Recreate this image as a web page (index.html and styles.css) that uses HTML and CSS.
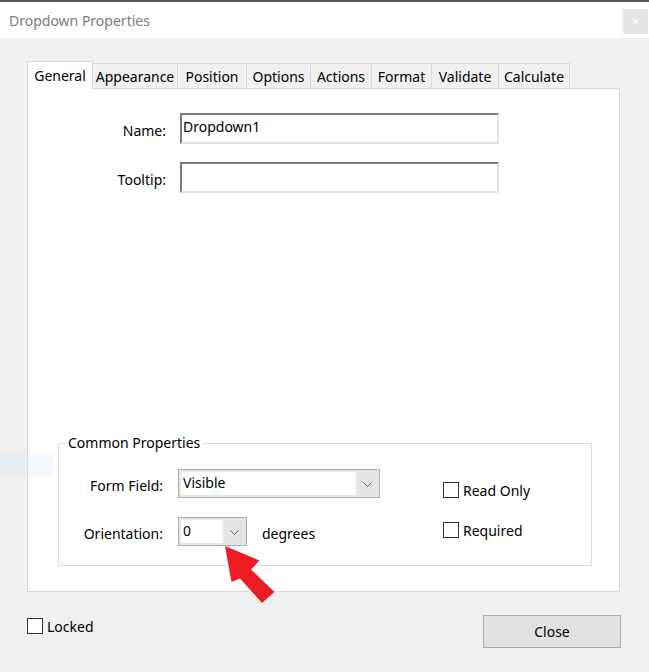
FILE: index.html
```html
<!DOCTYPE html>
<html>
<head>
    <meta charset="utf-8">
    <title>Dropdown Properties</title>
    <link rel="stylesheet" href="styles.css">
</head>
<body>
<div class="window">
    <div class="titlebar">
        <span class="title">Dropdown Properties</span>
        <span class="close-x">&#215;</span>
    </div>
    <div class="content">
        <div class="tabs">
            <div class="tab tab-general active">General</div>
            <div class="tab tab-appearance">Appearance</div>
            <div class="tab tab-position">Position</div>
            <div class="tab tab-options">Options</div>
            <div class="tab tab-actions">Actions</div>
            <div class="tab tab-format">Format</div>
            <div class="tab tab-validate">Validate</div>
            <div class="tab tab-calculate">Calculate</div>
        </div>
        <div class="panel">
            <div class="field-row">
                <label class="field-label">Name:</label>
                <div class="textbox">Dropdown1</div>
            </div>
            <div class="field-row">
                <label class="field-label">Tooltip:</label>
                <div class="textbox"></div>
            </div>
            <fieldset class="group">
                <legend>Common Properties</legend>
                <div class="group-body">
                    <div class="group-fields">
                        <div class="group-row">
                            <span class="group-label">Form Field:</span>
                            <div class="combo wide">
                                <span class="combo-value">Visible</span>
                                <span class="combo-arrow"><svg width="9" height="5" viewBox="0 0 9 5"><path d="M0.5 0.5 L4.5 4.5 L8.5 0.5" fill="none" stroke="#606060" stroke-width="1"/></svg></span>
                            </div>
                        </div>
                        <div class="group-row">
                            <span class="group-label">Orientation:</span>
                            <div class="combo narrow">
                                <span class="combo-value">0</span>
                                <span class="combo-arrow"><svg width="9" height="5" viewBox="0 0 9 5"><path d="M0.5 0.5 L4.5 4.5 L8.5 0.5" fill="none" stroke="#606060" stroke-width="1"/></svg></span>
                            </div>
                            <span class="unit">degrees</span>
                        </div>
                    </div>
                    <div class="group-checks">
                        <label class="check"><span class="box"></span>Read Only</label>
                        <label class="check"><span class="box"></span>Required</label>
                    </div>
                </div>
            </fieldset>
        </div>
        <div class="footer">
            <label class="check locked"><span class="box"></span>Locked</label>
            <button class="btn" type="button">Close</button>
        </div>
    </div>
    <div class="hover-strip"></div>
    <svg class="pointer" width="60" height="70" viewBox="0 0 60 70">
        <polygon points="5,6 39.5,20.5 31,29.5 54.5,52 42,63 20,38.5 11.5,42" fill="#ed1c24"/>
    </svg>
</div>
</body>
</html>
```

FILE: styles.css
```css
html, body{
    margin: 0;
    padding: 0;
}
body{
    background: #f0f0f0;
    font-family: "Noto Sans", "Open Sans", sans-serif;
    font-size: 14px;
    color: #000;
}
.window{
    position: relative;
    width: 649px;
    height: 672px;
    overflow: hidden;
    background: #f0f0f0;
}
.titlebar{
    height: 36px;
    border-top: 2px solid #575757;
    background: #fff;
    display: flex;
    align-items: center;
    justify-content: space-between;
    padding-left: 9px;
}
.title{
    color: #7b7b7b;
    font-size: 14px;
}
.close-x{
    width: 25px;
    height: 25px;
    margin-right: 1px;
    margin-top: 2px;
    background: #e5e5e5;
    color: #fafafa;
    font-size: 13px;
    line-height: 24px;
    text-align: center;
}
.content{
    padding: 23px 29px 0 27px;
}
.tabs{
    display: flex;
    align-items: flex-end;
    height: 27px;
}
.tab{
    box-sizing: border-box;
    height: 25px;
    line-height: 25px;
    text-align: center;
    border: 1px solid #d9d9d9;
    border-bottom: none;
    border-left: none;
    background: #f0f0f0;
    white-space: nowrap;
}
.tab.active{
    height: 28px;
    line-height: 27px;
    margin-bottom: -1px;
    border-left: 1px solid #d9d9d9;
    background: #fff;
    position: relative;
    z-index: 1;
}
.tab-general{ width: 66px; }
.tab-appearance{ width: 85px; }
.tab-position{ width: 69px; }
.tab-options{ width: 64px; }
.tab-actions{ width: 61px; }
.tab-format{ width: 60px; }
.tab-validate{ width: 67px; }
.tab-calculate{ width: 71px; }
.panel{
    box-sizing: border-box;
    height: 504px;
    border: 1px solid #d9d9d9;
    background: #fff;
    padding-top: 24px;
    display: flex;
    flex-direction: column;
}
.field-row{
    display: flex;
    align-items: center;
    margin-bottom: 18px;
}
.field-label{
    width: 138px;
    margin-right: 14px;
    text-align: right;
    margin-top: 3px;
}
.textbox{
    box-sizing: border-box;
    width: 319px;
    height: 31px;
    border-style: solid;
    border-width: 2px;
    border-color: #7a7a7a #e3e3e3 #e3e3e3 #7a7a7a;
    padding: 0 0 0 1px;
    line-height: 24px;
}
.group{
    margin: auto 27px 25px 30px;
    padding: 0;
    border: 1px solid #dcdcdc;
    min-width: 0;
}
.group legend{
    margin-left: 7px;
    padding: 0 2px;
    line-height: 18px;
}
.group-body{
    display: flex;
    padding: 17px 0 19px 0;
}
.group-fields{
    display: flex;
    flex-direction: column;
    gap: 19px;
}
.group-row{
    display: flex;
    align-items: center;
}
.group-label{
    width: 104px;
    margin-right: 15px;
    text-align: right;
    margin-top: 3px;
}
.combo{
    box-sizing: border-box;
    height: 29px;
    border: 1px solid #adadad;
    background: #e5e5e5;
    padding: 2px 0 2px 2px;
    display: flex;
}
.combo.wide{
    width: 202px;
}
.combo.narrow{
    width: 69px;
}
.combo-value{
    flex: 1;
    background: #fff;
    padding-left: 2px;
    line-height: 21px;
}
.combo-arrow{
    width: 23px;
    display: flex;
    align-items: center;
    justify-content: center;
    margin-top: 1px;
}
.unit{
    margin-left: 15px;
    margin-top: 3px;
}
.group-checks{
    display: flex;
    flex-direction: column;
    gap: 24px;
    margin-left: 63px;
    padding-top: 13px;
}
.check{
    display: flex;
    align-items: center;
    height: 16px;
}
.box{
    box-sizing: border-box;
    width: 16px;
    height: 16px;
    border: 1px solid #333;
    background: #fff;
    margin-right: 4px;
}
.footer{
    display: flex;
    justify-content: space-between;
    align-items: flex-start;
    padding-top: 23px;
}
.check.locked{
    margin-top: 3px;
}
.btn{
    width: 138px;
    height: 33px;
    border: 1px solid #adadad;
    background: #e1e1e1;
    font-family: "Noto Sans", "Open Sans", sans-serif;
    font-size: 14px;
    color: #000;
    padding: 0;
    margin-right: -1px;
}
.hover-strip{
    position: absolute;
    left: 0;
    top: 454px;
    width: 54px;
    height: 23px;
    background: rgba(204, 228, 247, 0.25);
}
.pointer{
    position: absolute;
    left: 220px;
    top: 540px;
}
```
